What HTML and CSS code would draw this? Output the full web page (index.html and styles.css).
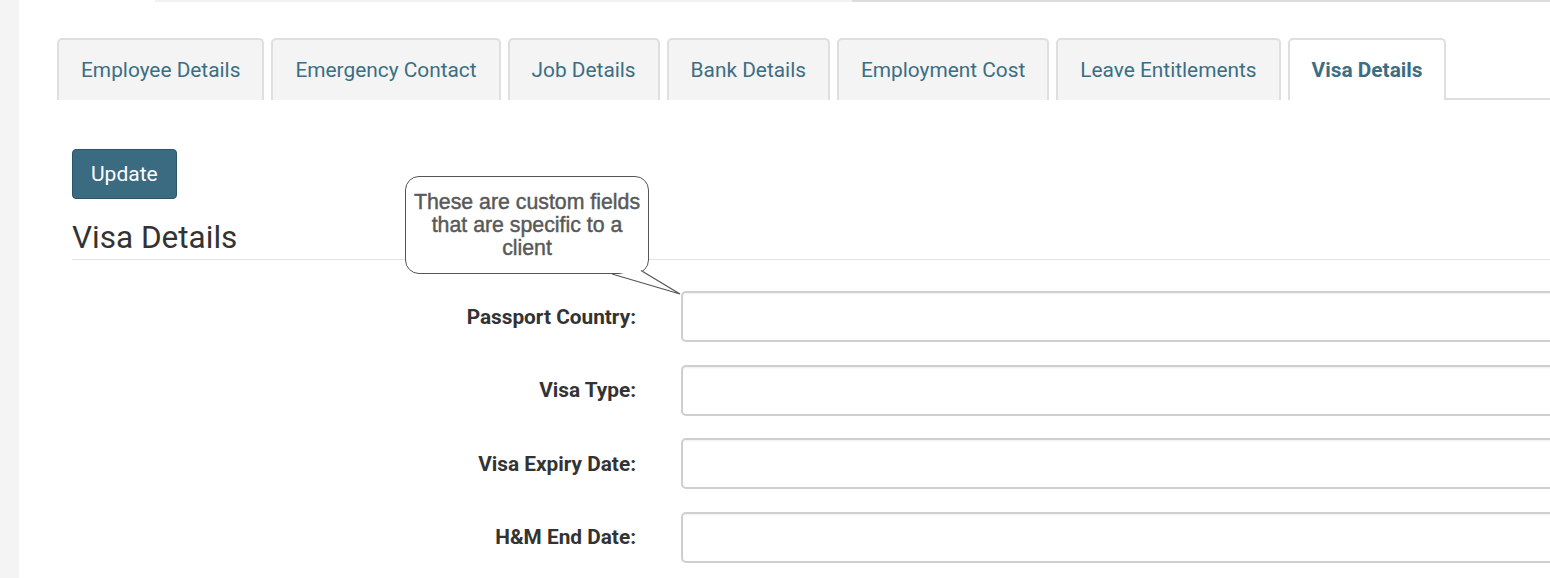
FILE: index.html
```html
<!DOCTYPE html>
<html lang="en">
<head>
<meta charset="utf-8">
<title>Visa Details</title>
<link rel="stylesheet" href="styles.css">
</head>
<body>
<div class="page">
  <aside class="sidebar"></aside>
  <main class="main">
    <div class="topstrip">
      <span class="ts-white"></span>
      <span class="ts-gray"></span>
      <span class="ts-line"></span>
    </div>
    <nav class="tabs">
      <span class="tab-spacer"></span>
      <a class="tab">Employee Details</a>
      <a class="tab">Emergency Contact</a>
      <a class="tab">Job Details</a>
      <a class="tab">Bank Details</a>
      <a class="tab">Employment Cost</a>
      <a class="tab">Leave Entitlements</a>
      <a class="tab active">Visa Details</a>
      <span class="tab-fill"></span>
    </nav>
    <section class="content">
      <button class="btn-update" type="button">Update</button>
      <h2 class="section-title">Visa Details</h2>
      <hr class="rule">
      <div class="callout">
        <div class="callout-box">These are custom fields that are specific to a client</div>
        <svg class="callout-tail" width="85" height="36" viewBox="0 0 85 36">
          <polygon points="12,13.5 80,32 41,7.5" fill="#fff"/>
          <path d="M12 12 L80 32 L41 8.5" fill="none" stroke="#555" stroke-width="1.2"/>
        </svg>
      </div>
      <form class="form">
        <label class="form-label">Passport Country:</label>
        <input class="form-input" type="text">
        <label class="form-label">Visa Type:</label>
        <input class="form-input" type="text">
        <label class="form-label">Visa Expiry Date:</label>
        <input class="form-input" type="text">
        <label class="form-label">H&amp;M End Date:</label>
        <input class="form-input" type="text">
      </form>
    </section>
  </main>
</div>
</body>
</html>
```

FILE: styles.css
```css
* { box-sizing: border-box; }
html, body {
  margin: 0;
  padding: 0;
  width: 1550px;
  height: 578px;
  overflow: hidden;
  background: #fff;
  font-family: Roboto, "Liberation Sans", Arial, sans-serif;
  color: #333;
}
.page {
  display: flex;
  height: 578px;
}
.sidebar {
  width: 19px;
  flex: none;
  background: #f4f4f4;
}
.main {
  flex: 1;
  min-width: 0;
  position: relative;
}
.topstrip {
  display: flex;
  height: 2px;
}
.ts-white { width: 136px; background: #fff; }
.ts-gray { width: 697px; background: #f1f1f1; }
.ts-line { flex: 1; background: #dcdcdc; }

.tabs {
  display: flex;
  margin-top: 36px;
  height: 62px;
  align-items: stretch;
}
.tab-spacer { width: 38px; flex: none; }
.tab {
  display: flex;
  align-items: center;
  padding: 0 22px;
  margin-right: 7px;
  background: #f4f4f4;
  border: 2px solid #dfdfdf;
  border-bottom: none;
  border-radius: 5px 5px 0 0;
  font-size: 20.85px;
  color: #3b6e84;
  white-space: nowrap;
  cursor: pointer;
}
.tab.active {
  background: #fff;
  font-weight: 700;
  color: #3b6e84;
  margin-right: 0;
  padding: 0 21px 0 22px;
}
.tab-fill {
  flex: 1;
  border-bottom: 2px solid #dfdfdf;
}

.content {
  position: relative;
  padding: 49px 0 0 53px;
}
.btn-update {
  display: block;
  height: 50px;
  padding: 0 18px;
  background: #3a6b80;
  border: 1px solid #2c5567;
  border-radius: 4px;
  color: #fff;
  font-family: Roboto, "Liberation Sans", Arial, sans-serif;
  font-size: 21px;
  line-height: 1;
}
.section-title {
  margin: 22px 0 0;
  font-size: 31.5px;
  font-weight: 400;
  line-height: 34px;
  color: #333;
}
.rule {
  margin: 4px 0 0;
  border: none;
  border-top: 1px solid #e3e3e3;
  height: 0;
}
.callout {
  position: absolute;
  left: 386px;
  top: 76px;
  width: 300px;
  height: 130px;
  pointer-events: none;
}
.callout-box {
  width: 244px;
  height: 98px;
  padding: 14px 2px 0;
  background: #fff;
  border: 1.5px solid #555;
  border-radius: 14px;
  font-family: "Liberation Sans", Arial, sans-serif;
  font-size: 21.3px;
  line-height: 23px;
  text-align: center;
  color: #595959;
  -webkit-text-stroke: 0.45px #595959;
}
.callout-tail {
  position: absolute;
  left: 195px;
  top: 86px;
  overflow: visible;
}
.form {
  display: grid;
  grid-template-columns: 564px 1fr;
  column-gap: 45px;
  row-gap: 22.5px;
  margin-top: 31px;
  margin-right: -120px;
  align-items: center;
}
.form-label {
  text-align: right;
  font-size: 20.8px;
  font-weight: 700;
  color: #333;
}
.form-input {
  height: 51px;
  width: 100%;
  border: 2px solid #cfcfcf;
  border-radius: 5px;
  box-shadow: inset 0 1px 2px rgba(0,0,0,0.06);
  background: #fff;
  font-size: 18px;
}
```
